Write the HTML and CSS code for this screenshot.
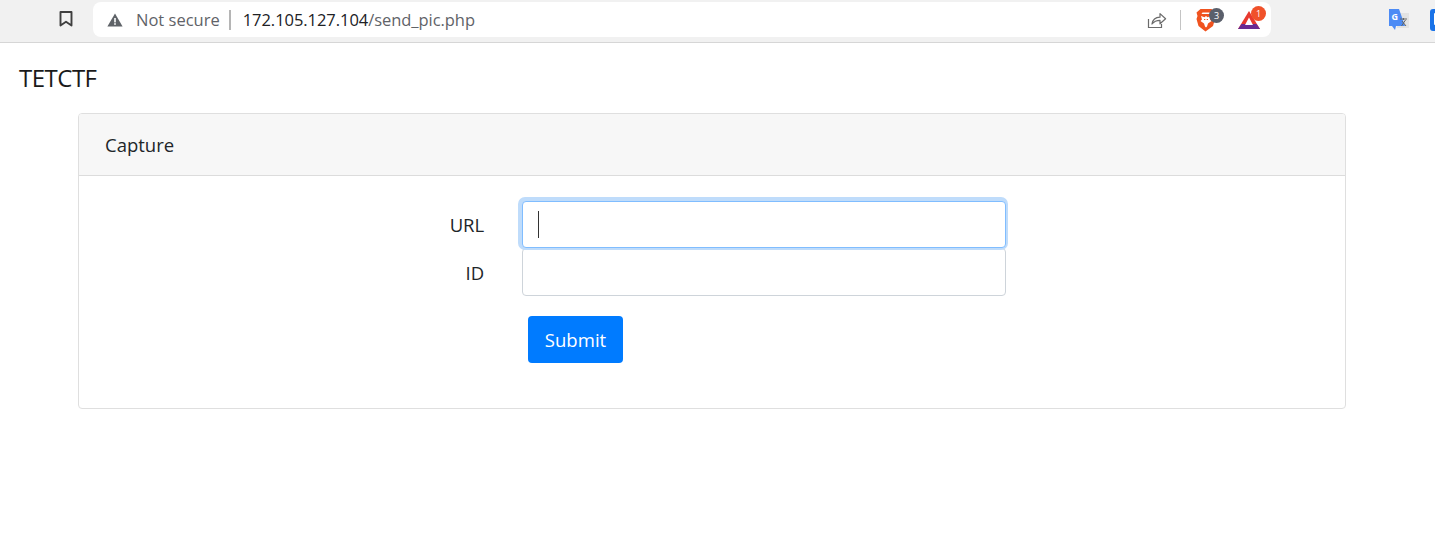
FILE: index.html
```html
<!DOCTYPE html>
<html lang="en">
<head>
<meta charset="utf-8">
<title>TETCTF</title>
<link rel="stylesheet" href="styles.css">
</head>
<body>
<header class="toolbar">
  <svg class="bookmark" width="14" height="16" viewBox="0 0 14 16"><path d="M1.500 1h11v13.500l-5.500-3.700-5.500 3.700z" fill="none" stroke="#3f3f3f" stroke-width="1.900" stroke-linejoin="round"/></svg>
  <div class="omnibox">
    <svg class="warn" width="16" height="14" viewBox="0 0 16 14"><path d="M8 0.500L15.600 13.500H0.400z" fill="#5f6368"/><rect x="7.200" y="5" width="1.600" height="4.400" fill="#fff"/><rect x="7.200" y="10.200" width="1.600" height="1.600" fill="#fff"/></svg>
    <span class="secure">Not secure</span>
    <span class="divider"></span>
    <span class="url">172.105.127.104<span class="path">/send_pic.php</span></span>
    <span class="omni-actions">
      <svg class="share" width="20" height="18" viewBox="0 0 20 18"><path d="M1.500 8v8.500h13V13" fill="none" stroke="#6b6b6b" stroke-width="1.200"/><path d="M5 13c.6-4 3.600-6.600 8-6.800V2.600l5.600 5.200-5.600 5V9.400C9.800 9.400 7 10.500 5 13z" fill="none" stroke="#6b6b6b" stroke-width="1.200" stroke-linejoin="round"/></svg>
      <span class="action-sep"></span>
      <span class="ext brave">
        <svg width="20" height="24" viewBox="0 0 20 24"><path d="M4.500 1h11l3.500 3.500-1 3.500 1 3-2 7-7.500 5.500L2.500 18l-2-7 1-3-1-3.500z" fill="#f0531f"/><path d="M5 8l3.500 1.200L10 8l1.500 1.200L15 8l-1 3.500 1.500 1.500-3.500 2.500-1 3-1 1-1-1-1-3L4.500 13 6 11.500z" fill="#fff"/><path d="M6.500 4.500h7l1 1.500h-9z" fill="#fff"/><path d="M8 11.500h1.300M10.700 11.500H12" stroke="#f0531f" stroke-width="1.200"/></svg>
        <span class="badge badge-gray">3</span>
      </span>
      <span class="ext bat">
        <svg width="24" height="20" viewBox="0 0 24 20"><path d="M12 1L23 19H1z" fill="#e8392f"/><path d="M1 19l3.500-5h15l3.500 5z" fill="#6a2a92"/><path d="M8 15L12 7.500 16 15z" fill="#fff"/></svg>
        <span class="badge badge-red">1</span>
      </span>
    </span>
  </div>
  <svg class="translate" width="22" height="24" viewBox="0 0 22 24"><rect x="9" y="5" width="12" height="15" fill="#e3e3e3"/><path d="M1 1h10l6 17H8l-1 4-3-4H1z" fill="#4c8bf5"/><text x="3.500" y="12" class="g-letter">G</text><path d="M12 11h7M15.500 10v2M13.500 18l4-6M14 13l4 5" stroke="#666" stroke-width="1" fill="none"/></svg>
  <span class="ext-blue"><span class="ext-blue-inner"></span></span>
</header>
<main class="page">
  <div class="brand">TETCTF</div>
  <section class="card">
    <div class="card-header">Capture</div>
    <form class="card-body">
      <div class="row">
        <label class="field-label" for="url">URL</label>
        <div class="control control-focus" id="url"><span class="caret"></span></div>
      </div>
      <div class="row">
        <label class="field-label" for="id">ID</label>
        <div class="control" id="id"></div>
      </div>
      <div class="actions"><button class="submit" type="button">Submit</button></div>
    </form>
  </section>
</main>
</body>
</html>
```
FILE: styles.css
```css
* { box-sizing: border-box; }
html, body { margin: 0; padding: 0; background: #fff; }
body { height: 545px; overflow: hidden; font-family: "Open Sans", "Noto Sans", sans-serif; color: #212529; }

.toolbar { height: 43px; background: #f1f1f1; border-bottom: 1px solid #d6d6d6; display: flex; align-items: flex-start; overflow: hidden; }
.bookmark { margin: 11px 0 0 59px; flex: none; }
.omnibox { margin: 2px 0 0 20px; width: 1178px; height: 35px; background: #fff; border-radius: 8px; display: flex; align-items: center; flex: none; padding-left: 14px; }
.warn { flex: none; }
.secure { margin-left: 13px; font-size: 16.500px; letter-spacing: 0; color: #5f6368; }
.divider { width: 2px; height: 20px; background: #b5b5b5; margin: 0 12px 0 9px; }
.url { font-size: 16.500px; letter-spacing: -0.05px; color: #202124; }
.path { color: #5f6368; }
.omni-actions { margin-left: auto; display: flex; align-items: center; }
.share { margin-right: 13px; }
.action-sep { width: 1px; height: 20px; background: #c4c4c4; margin-right: 15px; }
.ext { position: relative; display: block; }
.ext svg { display: block; }
.brave { width: 20px; height: 24px; margin-right: 21px; }
.bat { width: 24px; height: 20px; margin-right: 10px; }
.badge { position: absolute; width: 15px; height: 15px; border-radius: 50%; color: #fff; font-size: 9px; line-height: 15px; text-align: center; }
.badge-gray { background: #5a5f6b; top: 0; left: 13px; }
.badge-red { background: #f0512a; top: -4px; left: 14px; }
.translate { margin: 8px 0 0 117px; flex: none; }
.g-letter { font-size: 9px; font-weight: 700; fill: #fff; font-family: "Open Sans", sans-serif; }
.ext-blue { width: 20px; height: 22px; margin: 9px 0 0 20px; background: #1a73e8; border-radius: 3px; flex: none; padding: 4px 0 0 4px; }
.ext-blue-inner { display: block; width: 8px; height: 12px; background: #fff; border-radius: 1px; }

.page { padding: 20px 0 0 19px; }
.brand { font-size: 24px; line-height: 30px; letter-spacing: -0.5px; color: #1a1a1a; }
.card { margin: 20px 0 0 59px; width: 1268px; height: 296px; border: 1px solid #dfdfdf; border-radius: 4px; }
.card-header { height: 62px; padding: 0 26px; display: flex; align-items: center; background: #f7f7f7; border-bottom: 1px solid #dcdcdc; font-size: 18.500px; letter-spacing: 0; border-radius: 3px 3px 0 0; }
.card-body { padding-top: 25px; }
.row { display: flex; align-items: center; }
.field-label { width: 405px; text-align: right; font-size: 18.500px; letter-spacing: -0.1px; margin-right: 38px; }
.control { width: 484px; height: 48px; border: 1px solid #ced4da; border-radius: 4px; background: #fff; display: flex; align-items: center; padding-left: 15px; }
.control-focus { height: 47px; border-color: #80bdff; box-shadow: -1px -1px 0 3px #bfdcfb; position: relative; z-index: 1; }
.caret { width: 1px; height: 27px; background: #333; }
.actions { padding: 20px 0 0 449px; }
.submit { display: block; width: 95px; height: 47px; border: 0; border-radius: 4px; background: #007bff; color: #fff; font-family: inherit; font-size: 18.500px; letter-spacing: 0.05px; padding: 0; }
```
